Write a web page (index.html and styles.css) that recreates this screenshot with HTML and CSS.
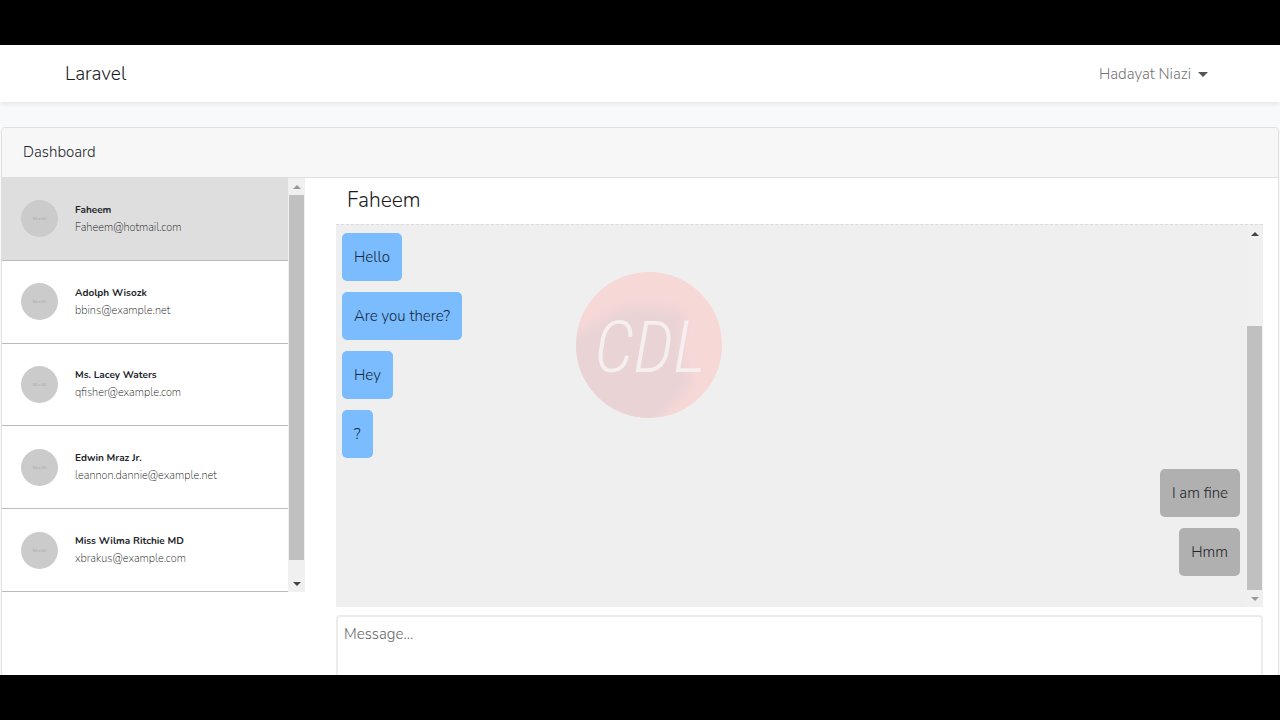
FILE: index.html
```html
<!DOCTYPE html>
<html lang="en">
<head>
    <meta charset="UTF-8">
    <meta name="viewport" content="width=device-width, initial-scale=1">
    <title>Laravel</title>
    <link rel="stylesheet" href="styles.css">
</head>
<body>
    <div class="app">
        <nav class="navbar">
            <a href="#" class="navbar-brand">Laravel</a>
            <button type="button" class="user-menu">Hadayat Niazi <span class="caret"></span></button>
        </nav>

        <main class="card">
            <div class="card-header">Dashboard</div>
            <div class="card-body">
                <aside class="contacts">
                    <ul class="contact-list">
                        <li class="contact active">
                            <span class="avatar">50 x 50</span>
                            <a href="#" class="contact-info">
                                <strong>Faheem</strong>
                                <span>Faheem@hotmail.com</span>
                            </a>
                        </li>
                        <li class="contact">
                            <span class="avatar">50 x 50</span>
                            <a href="#" class="contact-info">
                                <strong>Adolph Wisozk</strong>
                                <span>bbins@example.net</span>
                            </a>
                        </li>
                        <li class="contact">
                            <span class="avatar">50 x 50</span>
                            <a href="#" class="contact-info">
                                <strong>Ms. Lacey Waters</strong>
                                <span>qfisher@example.com</span>
                            </a>
                        </li>
                        <li class="contact">
                            <span class="avatar">50 x 50</span>
                            <a href="#" class="contact-info">
                                <strong>Edwin Mraz Jr.</strong>
                                <span>leannon.dannie@example.net</span>
                            </a>
                        </li>
                        <li class="contact">
                            <span class="avatar">50 x 50</span>
                            <a href="#" class="contact-info">
                                <strong>Miss Wilma Ritchie MD</strong>
                                <span>xbrakus@example.com</span>
                            </a>
                        </li>
                    </ul>
                    <div class="scrollbar">
                        <span class="arrow up muted"></span>
                        <div class="track"><div class="thumb"></div></div>
                        <span class="arrow down"></span>
                    </div>
                </aside>

                <section class="chat">
                    <h1 class="chat-title">Faheem</h1>
                    <div class="chat-box">
                        <div class="messages">
                            <p class="message">Hello</p>
                            <p class="message">Are you there?</p>
                            <p class="message">Hey</p>
                            <p class="message">?</p>
                            <p class="message sent">I am fine</p>
                            <p class="message sent">Hmm</p>
                        </div>
                        <div class="scrollbar">
                            <span class="arrow up"></span>
                            <div class="track at-end"><div class="thumb"></div></div>
                            <span class="arrow down muted"></span>
                        </div>
                        <svg class="watermark" viewBox="0 0 146 146" aria-label="CDL">
                            <defs>
                                <clipPath id="disc"><circle cx="73" cy="73" r="73"/></clipPath>
                                <filter id="soft" x="-20%" y="-20%" width="140%" height="140%"><feGaussianBlur stdDeviation="6"/></filter>
                            </defs>
                            <g clip-path="url(#disc)">
                                <rect width="146" height="146" fill="#f6d8d7"/>
                                <path d="M-20 72 L14 56 L36 40 L60 34 L108 38 L104 80 L116 110 L104 124 L70 160 L-20 160 Z" fill="#e9d3d4" filter="url(#soft)"/>
                            </g>
                            <text x="74" y="100" text-anchor="middle">CDL</text>
                        </svg>
                    </div>
                    <textarea class="message-input" placeholder="Message..." aria-label="Message"></textarea>
                </section>
            </div>
        </main>
    </div>
</body>
</html>
```
FILE: styles.css
```css
* {
    box-sizing: border-box;
}
body {
    margin: 0;
    padding: 45px 0;
    height: 100vh;
    background-color: #000;
    color: #212529;
    font-family: Nunito, Lato, sans-serif;
    font-size: 15px;
    font-weight: 300;
    line-height: 24px;
}
.app {
    height: 100%;
    overflow: hidden;
    background-color: #f8f9fb;
}
.navbar {
    display: flex;
    justify-content: space-between;
    align-items: center;
    height: 57px;
    padding: 1px 72px 0 65px;
    background-color: #fff;
    box-shadow: 0 2px 4px rgba(0, 0, 0, 0.08);
}
.navbar-brand {
    color: #1b1b1b;
    font-size: 19px;
    text-decoration: none;
}
.user-menu {
    display: flex;
    align-items: center;
    gap: 7px;
    padding: 0;
    border: 0;
    background: none;
    color: #737373;
    font: inherit;
}
.caret {
    border: 5px solid transparent;
    border-top-color: #555;
    border-bottom: 0;
}
.card {
    margin: 25px 1px 0;
    border: 1px solid #dfe0e1;
    border-radius: 4px 4px 0 0;
    background-color: #fff;
}
.card-header {
    padding: 12px 21px 13px;
    border-bottom: 1px solid #dfdfdf;
    border-radius: 4px 4px 0 0;
    background-color: #f7f7f7;
}
.card-body {
    display: flex;
    align-items: flex-start;
    gap: 31px;
    padding-right: 15px;
    min-height: 500px;
}

/* contacts */
.contacts {
    display: flex;
    flex: 0 0 303px;
    height: 414px;
}
.contact-list {
    display: flex;
    flex: 1;
    flex-direction: column;
    margin: 0;
    padding: 0;
    list-style: none;
}
.contact {
    display: flex;
    flex: 1;
    align-items: center;
    gap: 17px;
    padding-left: 19px;
    border-bottom: 1px solid #b9bbbc;
}
.contact.active {
    background-color: #dedede;
}
.avatar {
    width: 37px;
    height: 37px;
    border-radius: 50%;
    background-color: #cbcbcb;
    color: #999;
    font-size: 4px;
    line-height: 37px;
    text-align: center;
}
.contact-info {
    color: #111;
    font-size: 11px;
    font-weight: 200;
    line-height: 17px;
    text-decoration: none;
}
.contact-info strong,
.contact-info span {
    display: block;
}
.contact-info strong {
    color: #212529;
    font-size: 10px;
    font-weight: 700;
}

/* scrollbars */
.scrollbar {
    display: flex;
    flex-direction: column;
    align-items: center;
    width: 17px;
    background-color: #f0f0f0;
}
.arrow {
    display: flex;
    justify-content: center;
    align-items: center;
    height: 17px;
}
.arrow::before {
    content: "";
    border: 4px solid transparent;
}
.arrow.up::before {
    border-bottom-color: #444;
    border-top: 0;
}
.arrow.down::before {
    border-top-color: #444;
    border-bottom: 0;
}
.arrow.up.muted::before {
    border-bottom-color: #999;
}
.arrow.down.muted::before {
    border-top-color: #999;
}
.track {
    display: flex;
    flex: 1;
    flex-direction: column;
    width: 15px;
}
.track.at-end {
    justify-content: flex-end;
}
.thumb {
    height: 96%;
    background-color: #c0c0c0;
}
.at-end .thumb {
    height: 76%;
}

/* conversation */
.chat {
    flex: 1;
}
.chat-title {
    margin: 0;
    padding: 10px 11px 12px;
    color: #1b1b1b;
    font-size: 21px;
    font-weight: 300;
    line-height: 24px;
}
.chat-box {
    position: relative;
    display: flex;
    height: 383px;
    border-top: 1px dashed #dcdcdc;
    background-color: #efefef;
}
.messages {
    display: flex;
    flex: 1;
    flex-direction: column;
    align-items: flex-start;
    gap: 11px;
    padding: 8px 6px;
}
.message {
    margin: 0;
    padding: 12px;
    border-radius: 5px;
    background-color: #7abcfd;
    color: #14283c;
}
.message.sent {
    align-self: flex-end;
    background-color: #b0b0b0;
    color: #212529;
}
.watermark {
    position: absolute;
    top: 47px;
    left: 240px;
    width: 146px;
    height: 146px;
}
.watermark text {
    fill: #f6efef;
    font-family: "Roboto Condensed", "Liberation Sans Narrow", Nunito, sans-serif;
    font-size: 72px;
    font-style: italic;
    font-weight: 300;
}
.message-input {
    display: block;
    width: 100%;
    height: 75px;
    margin-top: 8px;
    padding: 5px 6px;
    border: 2px solid #ececec;
    border-radius: 4px;
    font: inherit;
    resize: none;
}
.message-input::placeholder {
    color: #666;
}
```
